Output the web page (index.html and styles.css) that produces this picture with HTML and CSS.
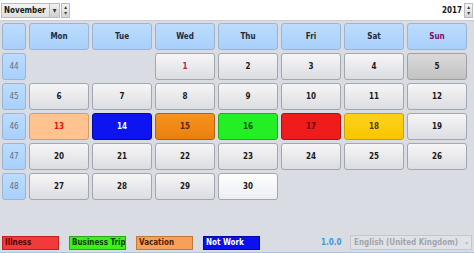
FILE: index.html
```html
<!DOCTYPE html>
<html>
<head>
<meta charset="utf-8">
<link rel="stylesheet" href="styles.css">
</head>
<body>
<div class="app">
  <div class="topbar">
    <div class="combo month">
      <span class="combo-text">November</span>
      <span class="combo-arrow">&#9662;</span>
    </div>
    <div class="spin"><span>&#9652;</span><span>&#9662;</span></div>
    <div class="year">2017</div>
    <div class="spin yspin"><span>&#9652;</span><span>&#9662;</span></div>
  </div>

  <div class="grid">
    <div class="wk hdr"></div>
    <div class="dh">Mon</div>
    <div class="dh">Tue</div>
    <div class="dh">Wed</div>
    <div class="dh">Thu</div>
    <div class="dh">Fri</div>
    <div class="dh">Sat</div>
    <div class="dh sun">Sun</div>

    <div class="wk">44</div>
    <div class="empty"></div>
    <div class="empty"></div>
    <div class="day first">1</div>
    <div class="day">2</div>
    <div class="day">3</div>
    <div class="day">4</div>
    <div class="day off">5</div>

    <div class="wk">45</div>
    <div class="day">6</div>
    <div class="day">7</div>
    <div class="day">8</div>
    <div class="day">9</div>
    <div class="day">10</div>
    <div class="day">11</div>
    <div class="day">12</div>

    <div class="wk">46</div>
    <div class="day vac-light">13</div>
    <div class="day notwork">14</div>
    <div class="day vacation">15</div>
    <div class="day trip">16</div>
    <div class="day illness">17</div>
    <div class="day yellow">18</div>
    <div class="day">19</div>

    <div class="wk">47</div>
    <div class="day">20</div>
    <div class="day">21</div>
    <div class="day">22</div>
    <div class="day">23</div>
    <div class="day">24</div>
    <div class="day">25</div>
    <div class="day">26</div>

    <div class="wk">48</div>
    <div class="day">27</div>
    <div class="day">28</div>
    <div class="day">29</div>
    <div class="day today">30</div>
  </div>

  <div class="footer">
    <div class="legend l-ill">Illness</div>
    <div class="legend l-trip">Business Trip</div>
    <div class="legend l-vac">Vacation</div>
    <div class="legend l-nw">Not Work</div>
    <div class="version">1.0.0</div>
    <div class="lang"><span>English (United Kingdom)</span><span class="lang-arrow">&#9662;</span></div>
  </div>
</div>
</body>
</html>
```

FILE: styles.css
```css
html, body {
  margin: 0;
  padding: 0;
}
body {
  background: #d9dce2;
  font-family: "DejaVu Sans Condensed", "DejaVu Sans", sans-serif;
  font-stretch: condensed;
  font-size: 8px;
  font-weight: bold;
  color: #1a1a1a;
  white-space: nowrap;
}
.app {
  width: 474px;
  height: 253px;
  display: flex;
  flex-direction: column;
  box-sizing: border-box;
  border-bottom: 1px solid #a9c4de;
}
.topbar {
  height: 21px;
  background: #ffffff;
  border-bottom: 1px solid #c9ccd2;
  display: flex;
  align-items: center;
  padding: 0 1px 0 1px;
  box-sizing: border-box;
}
.combo {
  display: flex;
  align-items: center;
  height: 15px;
  box-sizing: border-box;
  border: 1px solid #b9bcc2;
  background: linear-gradient(#f4f4f4, #dedede);
}
.month {
  width: 59px;
  padding-left: 2px;
}
.combo-text {
  flex: 1;
}
.combo-arrow {
  width: 9px;
  height: 13px;
  display: flex;
  align-items: center;
  justify-content: center;
  font-size: 8px;
  color: #333;
  background: linear-gradient(#f2f2f2, #cfcfcf);
  border-left: 1px solid #b9bcc2;
}
.spin {
  margin-left: 1px;
  width: 9px;
  height: 15px;
  display: flex;
  flex-direction: column;
  border: 1px solid #b9bcc2;
  box-sizing: border-box;
  background: linear-gradient(#f4f4f4, #d6d6d6);
}
.spin span {
  flex: 1;
  font-size: 6px;
  line-height: 6px;
  text-align: center;
  color: #333;
}
.year {
  flex: 1;
  text-align: right;
  padding-right: 1px;
}
.yspin {
  margin-left: 1px;
}
.grid {
  display: grid;
  grid-template-columns: 24px repeat(7, 60px);
  grid-auto-rows: 27px;
  column-gap: 3px;
  row-gap: 3px;
  padding: 2px 0 0 2px;
}
.grid > div {
  box-sizing: border-box;
  border-radius: 3px;
  display: flex;
  align-items: center;
  justify-content: center;
}
.dh, .wk {
  background: linear-gradient(#bcdcff, #a8d0fb);
  border: 1px solid #9cb4cf;
}
.dh {
  color: #1f2a3a;
}
.sun {
  color: #7a0f6a;
}
.wk {
  color: #5f7088;
  font-weight: normal;
}
.day {
  background: linear-gradient(#f6f6f7, #dcdde1);
  border: 1px solid #a3a6ad;
  color: #1a1a1a;
}
.first {
  color: #b02060;
}
.off {
  background: linear-gradient(#dadada, #c2c2c2);
  border-color: #a0a0a0;
}
.today {
  background: linear-gradient(#ffffff, #eceef2);
}
.vac-light {
  background: #ffc38f;
  border-color: #d99a66;
  color: #e81010;
}
.notwork {
  background: #0d14f2;
  border-color: #0a0a90;
  color: #ffffff;
}
.vacation {
  background: linear-gradient(#f7931e, #e9800e);
  border-color: #b0620a;
  color: #5a2500;
}
.trip {
  background: #24ef24;
  border-color: #18b018;
  color: #0d4a0d;
}
.illness {
  background: #f01b1b;
  border-color: #b01010;
  color: #6a0000;
}
.yellow {
  background: linear-gradient(#ffd21a, #f8c500);
  border-color: #c9a000;
  color: #4a3a00;
}
.footer {
  margin-top: auto;
  height: 15px;
  margin-bottom: 2px;
  display: flex;
  align-items: center;
  padding-left: 2px;
}
.legend {
  width: 57px;
  height: 14px;
  box-sizing: border-box;
  padding-left: 2px;
  display: flex;
  align-items: center;
  margin-right: 10px;
  overflow: hidden;
}
.l-ill { background: #f23a3a; color: #5a0000; border: 1px solid #c02020; }
.l-trip { background: #3cf01c; color: #0f3a05; border: 1px solid #28a818; }
.l-vac { background: #f7a05a; color: #4a2200; border: 1px solid #c07838; }
.l-nw { background: #0a10f0; color: #ffffff; border: 1px solid #0808a0; }
.version {
  margin-left: 51px;
  color: #3c9ad4;
  width: 29px;
}
.lang {
  width: 122px;
  height: 15px;
  box-sizing: border-box;
  border: 1px solid #c4c7cd;
  background: #e0e2e6;
  color: #a2a6ae;
  display: flex;
  align-items: center;
  padding-left: 3px;
}
.lang span:first-child {
  flex: 1;
}
.lang-arrow {
  width: 9px;
  font-size: 6px;
  color: #b5b8be;
  text-align: center;
}
```
